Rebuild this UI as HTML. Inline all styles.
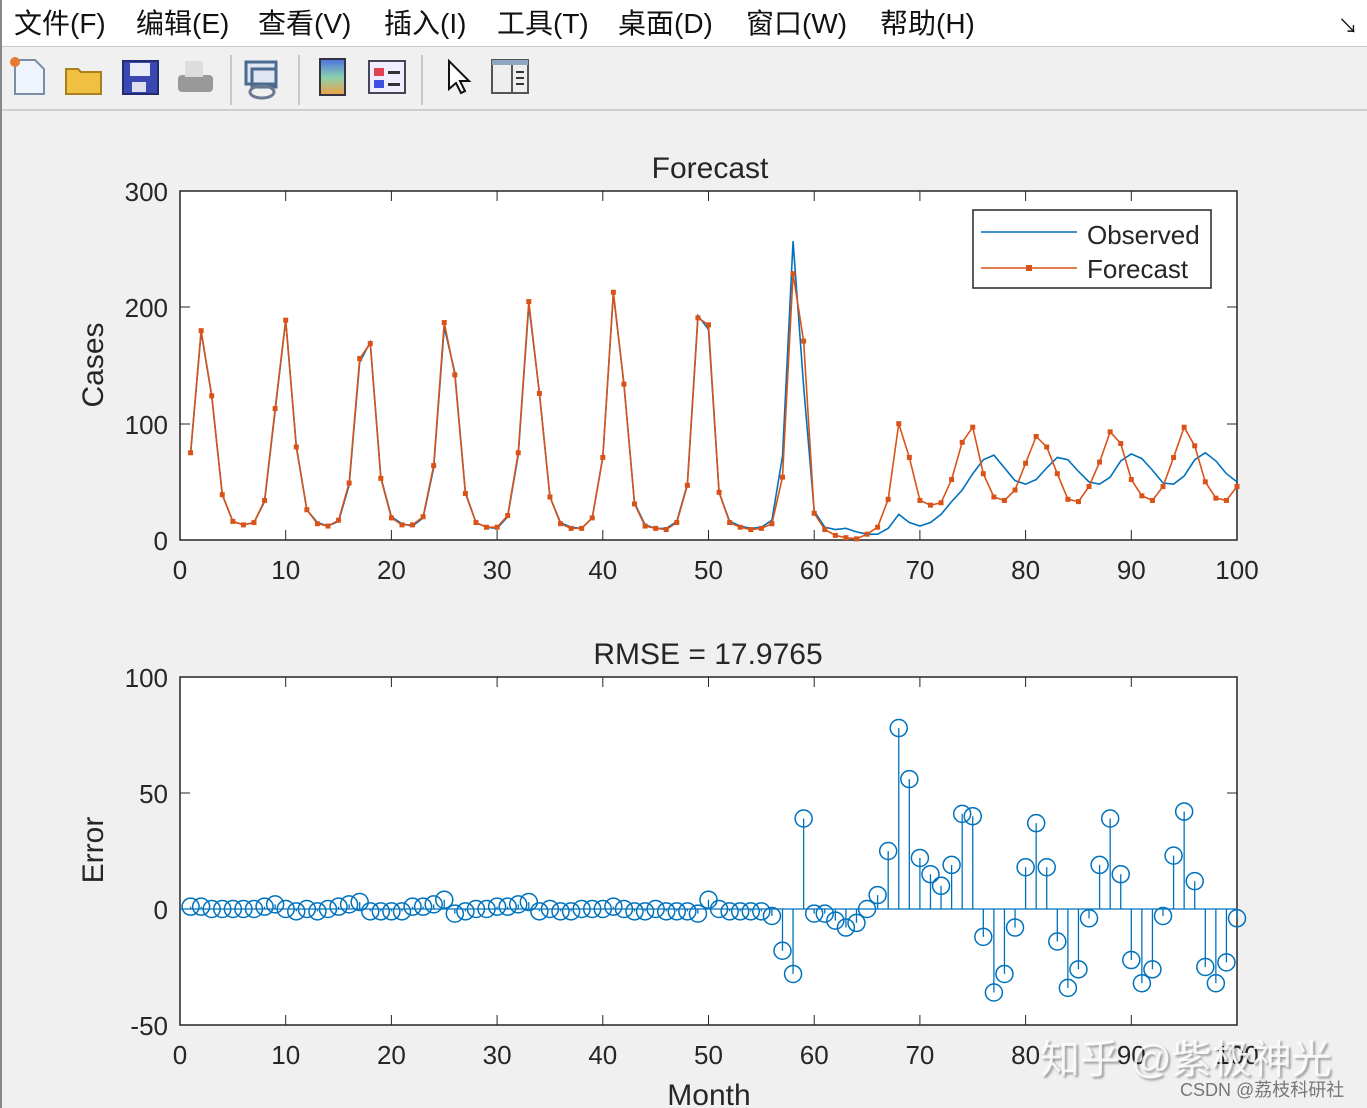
<!DOCTYPE html>
<html><head><meta charset="utf-8"><style>
body{margin:0;width:1367px;height:1108px;overflow:hidden;background:#f0f0f0;font-family:"Liberation Sans","Noto Sans CJK SC",sans-serif;position:relative}
.menu{position:absolute;left:0;top:0;width:1367px;height:46px;background:#fff;border-bottom:1px solid #c8c8c8}
.menu span{position:absolute;top:2px;font-size:28px;color:#111}
.tb{position:absolute;left:0;top:47px;width:1367px;height:62px;background:#f0f0f0;border-bottom:2px solid #cfcfcf}
.sep{position:absolute;top:8px;width:2px;height:50px;background:#c8c8c8}
.lb{position:absolute;left:0;top:0;width:2px;height:1108px;background:#888}
</style></head><body>
<div class="menu">
<span style="left:14px">文件(F)</span><span style="left:136px">编辑(E)</span><span style="left:258px">查看(V)</span><span style="left:384px">插入(I)</span><span style="left:497px">工具(T)</span><span style="left:618px">桌面(D)</span><span style="left:746px">窗口(W)</span><span style="left:880px">帮助(H)</span>
<span style="left:1338px;font-size:20px;top:10px">↘</span>
</div>
<div class="tb">
<svg width="560" height="62" style="position:absolute;left:0;top:0">
<path d="M15 13h20l9 9v25h-29z" fill="#eef4fb" stroke="#7a8ea8" stroke-width="2"/><circle cx="15" cy="15" r="5" fill="#e87a30"/>
<path d="M66 22h12l3 3h20v22h-35z" fill="#f0c040" stroke="#a88020" stroke-width="2"/>
<rect x="123" y="14" width="35" height="33" fill="#3b47b0" stroke="#222a70" stroke-width="2"/><rect x="130" y="16" width="20" height="13" fill="#e8ecf8"/><rect x="132" y="35" width="14" height="10" fill="#dde"/>
<rect x="178" y="28" width="35" height="17" rx="4" fill="#999" /><rect x="185" y="14" width="18" height="16" fill="#ddd"/>
<rect x="246" y="15" width="30" height="22" fill="#dfe6f2" stroke="#4a6a90" stroke-width="3"/><rect x="252" y="22" width="24" height="18" fill="none" stroke="#4a6a90" stroke-width="3"/><ellipse cx="262" cy="45" rx="12" ry="6" fill="none" stroke="#6a7a90" stroke-width="3"/>
<defs><linearGradient id="g" x1="0" y1="0" x2="0" y2="1"><stop offset="0" stop-color="#4a70e0"/><stop offset=".5" stop-color="#8ad0b0"/><stop offset="1" stop-color="#f0a040"/></linearGradient></defs>
<rect x="320" y="12" width="25" height="36" fill="url(#g)" stroke="#334" stroke-width="2"/>
<rect x="369" y="14" width="36" height="32" fill="#eef" stroke="#445" stroke-width="2"/><rect x="374" y="21" width="10" height="8" fill="#e04050"/><rect x="374" y="33" width="10" height="8" fill="#4050e0"/><rect x="388" y="24" width="12" height="3" fill="#333"/><rect x="388" y="36" width="12" height="3" fill="#333"/>
<path d="M449 14v28l7-6 5 10 4-2-5-10h9z" fill="#fff" stroke="#111" stroke-width="2"/>
<rect x="492" y="13" width="36" height="33" fill="#eee" stroke="#555" stroke-width="2"/><rect x="492" y="13" width="36" height="5" fill="#8fa6c0"/><line x1="512" y1="18" x2="512" y2="46" stroke="#555" stroke-width="2"/><path d="M516 25h8M516 31h8M516 37h8" stroke="#333" stroke-width="2"/>
</svg>
<div class="sep" style="left:230px"></div><div class="sep" style="left:298px"></div><div class="sep" style="left:421px"></div>
</div>
<div class="lb"></div>
<svg id="c" width="1367" height="1108" style="position:absolute;left:0;top:0" font-family="Liberation Sans, sans-serif"></svg>
<div style="position:absolute;left:1040px;top:1027px;font-size:40px;color:rgba(255,255,255,.85);text-shadow:2px 2px 2px rgba(0,0,0,.35);font-family:'Liberation Sans','Noto Sans CJK SC',sans-serif">知乎 @紫极神光</div>
<div style="position:absolute;left:1180px;top:1076px;font-size:18px;color:#777;font-family:'Liberation Sans','Noto Sans CJK SC',sans-serif">CSDN @荔枝科研社</div>
<script>
var F=[75,180,124,39,16,13,15,34,113,189,80,26,14,12,17,49,156,169,53,19,13,13,20,64,187,142,40,15,11,11,21,75,205,126,37,14,10,10,19,71,213,134,31,12,10,9,15,47,191,185,41,15,11,9,10,14,54,229,171,23,9,4,2,1,5,11,35,100,71,34,30,32,52,84,97,57,37,34,43,66,89,80,57,35,33,46,67,93,83,52,38,34,46,71,97,81,50,36,34,46];
var E=[1,1,0,0,0,0,0,1,2,0,-1,0,-1,0,1,2,3,-1,-1,-1,-1,1,1,2,4,-2,-1,0,0,1,1,2,3,-1,0,-1,-1,0,0,0,1,0,-1,-1,0,-1,-1,-1,-2,4,0,-1,-1,-1,-1,-3,-18,-28,39,-2,-2,-5,-8,-6,0,6,25,78,56,22,15,10,19,41,40,-12,-36,-28,-8,18,37,18,-14,-34,-26,-4,19,39,15,-22,-32,-26,-3,23,42,12,-25,-32,-23,-4];
var s='';function X(i){return 180+i*10.57}
function T(x,y,t,a,sz,extra){s+='<text x="'+x+'" y="'+y+'" font-size="'+(sz||26)+'" text-anchor="'+(a||'middle')+'" fill="#262626" '+(extra||'')+'>'+t+'</text>'}
function axes(top,bot,yt,yv){s+='<rect x="180" y="'+top+'" width="1057" height="'+(bot-top)+'" fill="#fff" stroke="#262626" stroke-width="1.5"/>';
for(var k=0;k<=10;k++){var x=X(k*10);s+='<path d="M'+x+' '+top+'v10M'+x+' '+bot+'v-10" stroke="#262626"/>';T(x,bot+39,k*10)}
yt.forEach(function(y,j){s+='<path d="M180 '+y+'h10M1237 '+y+'h-10" stroke="#262626"/>';T(168,y+10,yv[j],'end')})}
axes(191,540,[191,307,424,540],[300,200,100,0]);
axes(677,1025,[677,793,909,1025],[100,50,0,-50]);
T(710,178,'Forecast','middle',30);T(708,664,'RMSE = 17.9765','middle',30);
T(103,365,'Cases','middle',30,'transform="rotate(-90 103 365)"');T(103,850,'Error','middle',30,'transform="rotate(-90 103 850)"');
T(709,1105,'Month','middle',30);
function Y1(v){return 540-v*1.163}
var o='',f='';for(var i=0;i<100;i++){o+=(i?'L':'M')+X(i+1)+' '+Y1(F[i]-E[i]);f+=(i?'L':'M')+X(i+1)+' '+Y1(F[i])}
s+='<path d="'+o+'" fill="none" stroke="#0072bd" stroke-width="1.6"/>';
s+='<path d="'+f+'" fill="none" stroke="#d95319" stroke-width="1.6"/>';
for(i=0;i<100;i++)s+='<rect x="'+(X(i+1)-2.5)+'" y="'+(Y1(F[i])-2.5)+'" width="5" height="5" fill="#d95319"/>';
s+='<rect x="973" y="210" width="238" height="78" fill="#fff" stroke="#262626" stroke-width="1.5"/><path d="M981 232h96" stroke="#0072bd" stroke-width="1.6"/><path d="M981 268h96" stroke="#d95319" stroke-width="1.6"/><rect x="1026" y="265" width="6" height="6" fill="#d95319"/>';
T(1087,244,'Observed','start');T(1087,278,'Forecast','start');
s+='<path d="M180 909H1237" stroke="#0072bd" stroke-width="1.3"/>';
for(i=0;i<100;i++){var y=909-E[i]*2.32;s+='<path d="M'+X(i+1)+' 909V'+y+'" stroke="#0072bd" stroke-width="1.3"/><circle cx="'+X(i+1)+'" cy="'+y+'" r="8.5" fill="none" stroke="#0072bd" stroke-width="1.5"/>'}
document.getElementById('c').innerHTML=s;
</script>
</body></html>
